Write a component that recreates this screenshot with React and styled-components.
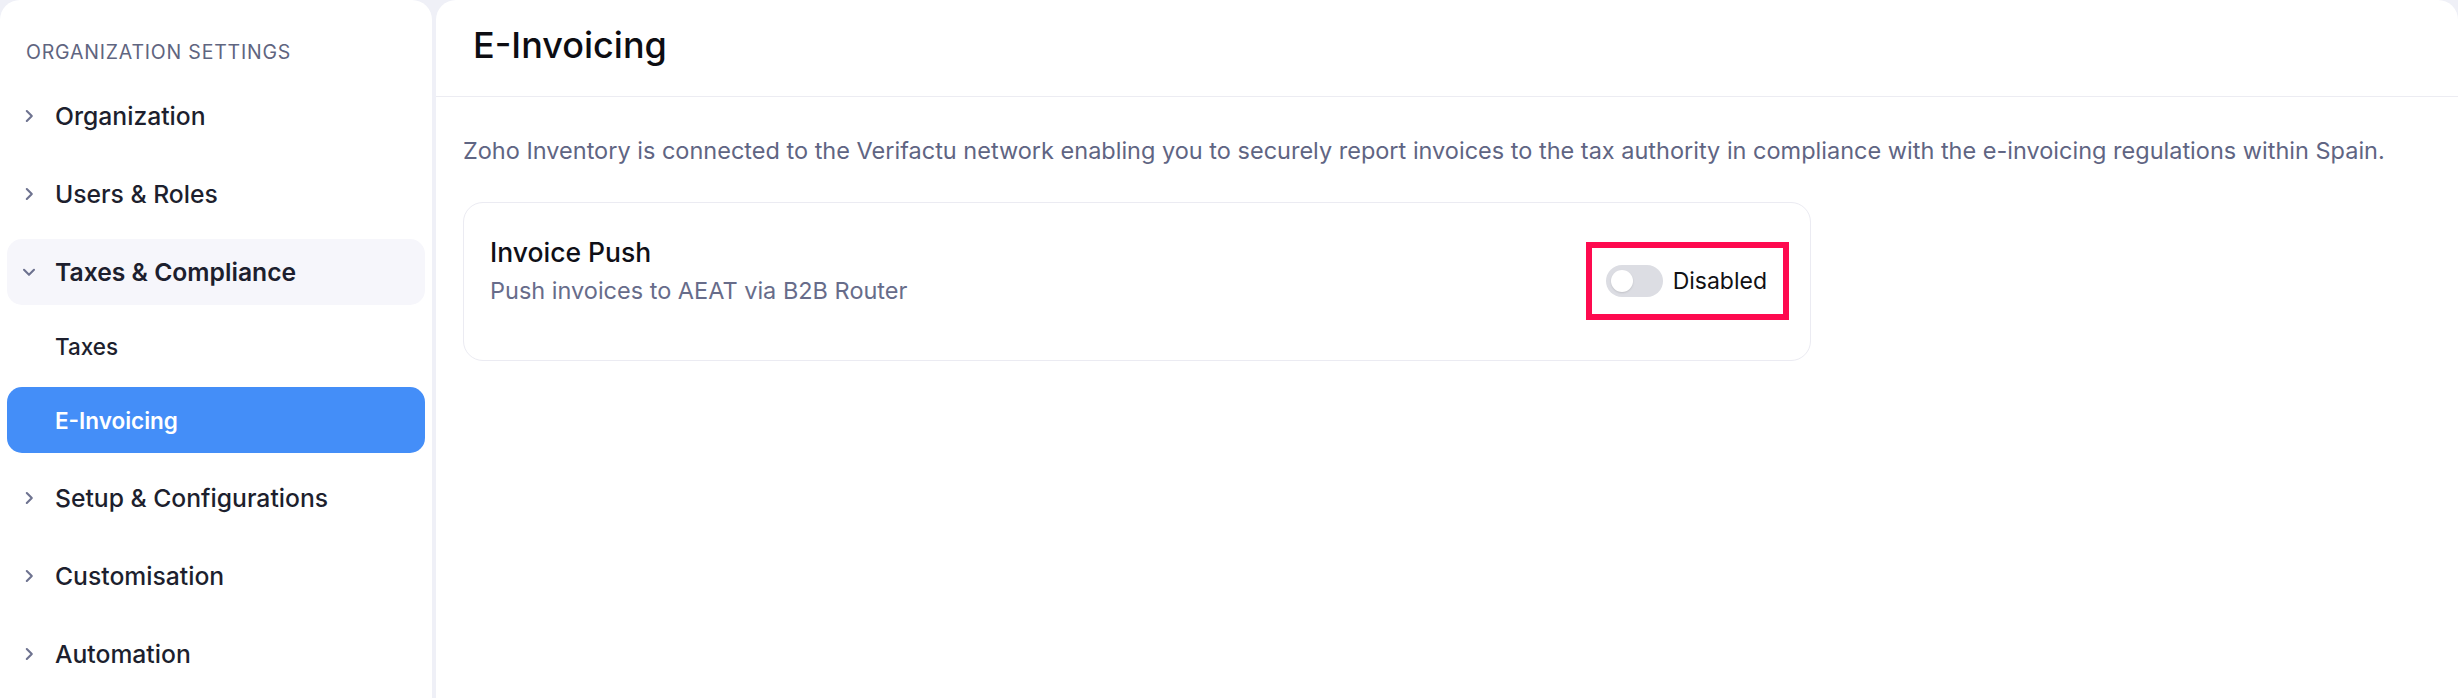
import React from 'react'
import styled, { createGlobalStyle } from 'styled-components'

const GlobalStyle = createGlobalStyle`
  html, body {
    margin: 0;
    padding: 0;
    background: #eff0f7;
    font-family: Inter, "Noto Sans", "Liberation Sans", sans-serif;
    -webkit-font-smoothing: antialiased;
  }
  * { box-sizing: border-box; }
`

const Layout = styled.div`
  display: flex;
  gap: 4px;
  height: 100vh;
  overflow: hidden;
`

const Sidebar = styled.aside`
  width: 432px;
  flex-shrink: 0;
  background: #ffffff;
  border-radius: 20px 20px 0 0;
  padding: 37px 7px 0;
`

const SectionLabel = styled.div`
  padding-left: 19px;
  font-size: 19.5px;
  line-height: 30px;
  letter-spacing: 0.8px;
  text-transform: uppercase;
  color: #5f6580;
`

const NavList = styled.nav`
  display: flex;
  flex-direction: column;
  gap: 12px;
  margin-top: 16px;
`

const NavGroup = styled.div`
  display: flex;
  flex-direction: column;
  gap: 8px;
`

const NavItem = styled.div`
  display: flex;
  align-items: center;
  gap: 19px;
  height: 66px;
  padding-left: ${p => (p.sub ? '48px' : '15px')};
  border-radius: 15px;
  font-size: ${p => (p.sub ? '22.5px' : '24.7px')};
  font-weight: ${p => (p.active || p.open ? 600 : 500)};
  color: ${p => (p.active ? '#ffffff' : '#1d1f2e')};
  background: ${p => (p.active ? '#448ef8' : p.open ? '#f6f6fb' : 'transparent')};
  cursor: pointer;
`

const Chevron = styled.svg`
  width: 14px;
  height: 14px;
  flex-shrink: 0;
  transform: ${p => (p.open ? 'rotate(90deg)' : 'none')};
`

const Main = styled.main`
  flex: 1;
  background: #ffffff;
  border-radius: 20px 20px 0 0;
  display: flex;
  flex-direction: column;
`

const Header = styled.header`
  height: 96.5px;
  display: flex;
  align-items: flex-start;
  padding: 23px 0 0 37px;
  border-bottom: 1.5px solid #ececf2;
`

const Title = styled.h1`
  margin: 0;
  font-size: 36px;
  line-height: 44px;
  font-weight: 500;
  color: #0d0d12;
`

const Content = styled.section`
  padding: 37px 27px;
`

const Description = styled.p`
  margin: 0 0 34px;
  font-size: 23.5px;
  line-height: 34px;
  color: #5f6583;
`

const Card = styled.div`
  width: 1348px;
  min-height: 159px;
  display: flex;
  align-items: center;
  justify-content: space-between;
  padding: 0 21px 0 26px;
  border: 1.5px solid #ebebf2;
  border-radius: 20px;
`

const CardText = styled.div`
  display: flex;
  flex-direction: column;
  gap: 4px;
  margin-bottom: 20px;
`

const CardTitle = styled.div`
  font-size: 26.5px;
  line-height: 36px;
  font-weight: 500;
  color: #0f0f17;
`

const CardSub = styled.div`
  font-size: 23.5px;
  line-height: 34px;
  color: #676c8a;
`

const Highlight = styled.div`
  display: flex;
  align-items: center;
  gap: 10px;
  height: 78px;
  padding: 0 16px 0 14px;
  border: 6px solid #fe0a4f;
`

const Track = styled.div`
  position: relative;
  width: 57px;
  height: 32px;
  border-radius: 16px;
  background: ${p => (p.on ? '#448ef8' : '#dcdde3')};
`

const Knob = styled.span`
  position: absolute;
  top: 5px;
  left: ${p => (p.on ? '30px' : '5px')};
  width: 22px;
  height: 22px;
  border-radius: 50%;
  background: #ffffff;
  box-shadow: 0 1px 2px rgba(0, 0, 0, 0.12);
`

const ToggleLabel = styled.span`
  font-size: 23px;
  color: #111114;
`

const ChevronIcon = ({ open }) => (
  <Chevron open={open} viewBox="0 0 14 14" fill="none">
    <path d="M4.8 2 L9.8 7 L4.8 12" stroke="#6e7390" strokeWidth="2.1" strokeLinecap="round" strokeLinejoin="round" />
  </Chevron>
)

const items = ['Organization', 'Users & Roles']
const after = ['Setup & Configurations', 'Customisation', 'Automation']

export default function App() {
  const on = false
  return (
    <>
      <GlobalStyle />
      <Layout>
        <Sidebar>
          <SectionLabel>Organization Settings</SectionLabel>
          <NavList>
            {items.map(name => (
              <NavItem key={name}>
                <ChevronIcon />
                {name}
              </NavItem>
            ))}
            <NavGroup>
              <NavItem open>
                <ChevronIcon open />
                Taxes &amp; Compliance
              </NavItem>
              <NavItem sub>Taxes</NavItem>
              <NavItem sub active>E-Invoicing</NavItem>
            </NavGroup>
            {after.map(name => (
              <NavItem key={name}>
                <ChevronIcon />
                {name}
              </NavItem>
            ))}
          </NavList>
        </Sidebar>
        <Main>
          <Header>
            <Title>E-Invoicing</Title>
          </Header>
          <Content>
            <Description>
              Zoho Inventory is connected to the Verifactu network enabling you to securely report invoices to the tax authority in compliance with the e-invoicing regulations within Spain.
            </Description>
            <Card>
              <CardText>
                <CardTitle>Invoice Push</CardTitle>
                <CardSub>Push invoices to AEAT via B2B Router</CardSub>
              </CardText>
              <Highlight>
                <Track on={on}>
                  <Knob on={on} />
                </Track>
                <ToggleLabel>Disabled</ToggleLabel>
              </Highlight>
            </Card>
          </Content>
        </Main>
      </Layout>
    </>
  )
}
